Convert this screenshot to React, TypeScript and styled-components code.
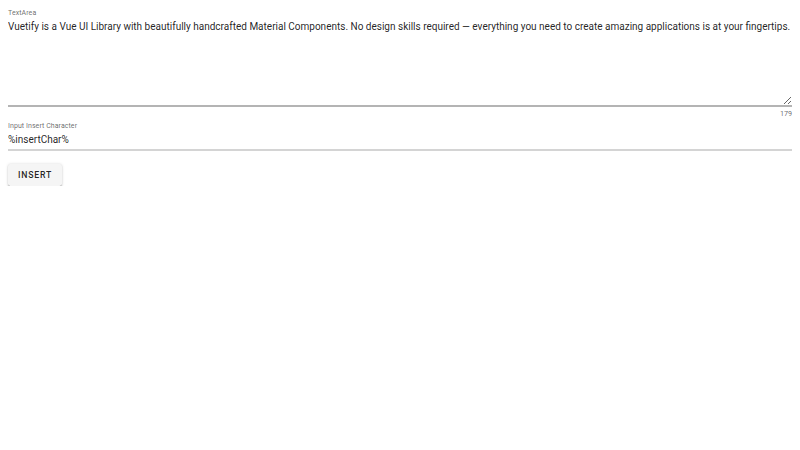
import React, { useState } from "react";
import styled, { createGlobalStyle } from "styled-components";

const GlobalStyle = createGlobalStyle`
  html, body { margin: 0; padding: 0; background: #ffffff; }
  body { font-family: Roboto, "Noto Sans", "Liberation Sans", sans-serif; }
  * { box-sizing: border-box; }
`;

const Page = styled.div`
  display: flex;
  flex-direction: column;
  padding: 8px 8px 0 8px;
  width: 800px;
`;

const Field = styled.div`
  display: flex;
  flex-direction: column;
`;

const Label = styled.label`
  display: block;
  font-size: 7px;
  line-height: 10px;
  height: 10px;
  color: rgba(0, 0, 0, 0.6);
  letter-spacing: 0.01em;
`;

const TextAreaBox = styled.textarea`
  display: block;
  width: 100%;
  height: 89px;
  margin: 0;
  padding: 1px 0 0 0;
  border: none;
  border-bottom: 2px solid #b4b4b4;
  outline: none;
  resize: vertical;
  font-family: Roboto, "Noto Sans", "Liberation Sans", sans-serif;
  font-size: 10px;
  line-height: 16.8px;
  color: rgba(0, 0, 0, 0.87);
  background: transparent;
  overflow: hidden;
`;

const Counter = styled.div`
  align-self: flex-end;
  font-size: 7.2px;
  line-height: 10px;
  height: 12px;
  padding-top: 2px;
  color: rgba(0, 0, 0, 0.6);
`;

const Spacer = styled.div<{ h: number }>`
  height: ${(p) => p.h}px;
`;

const TextInput = styled.input`
  display: block;
  width: 100%;
  height: 20px;
  margin: 0;
  padding: 0 0 2px 0;
  border: none;
  border-bottom: 2px solid #d4d4d4;
  outline: none;
  font-family: Roboto, "Noto Sans", "Liberation Sans", sans-serif;
  font-size: 10px;
  line-height: 16px;
  color: rgba(0, 0, 0, 0.87);
  background: transparent;
`;

const Button = styled.button`
  align-self: flex-start;
  height: 22px;
  width: 54px;
  padding: 0;
  border: none;
  border-radius: 2.4px;
  background: #f5f5f5;
  color: rgba(0, 0, 0, 0.87);
  font-family: Roboto, "Noto Sans", "Liberation Sans", sans-serif;
  font-size: 8.7px;
  font-weight: 500;
  letter-spacing: 0.0892em;
  text-transform: uppercase;
  box-shadow: 0 2px 1px -1.2px rgba(0, 0, 0, 0.22),
    0 1.2px 1.5px 0 rgba(0, 0, 0, 0.16), 0 0.6px 3px 0 rgba(0, 0, 0, 0.14);
  cursor: pointer;
`;

const initialText =
  "Vuetify is a Vue UI Library with beautifully handcrafted Material Components. No design skills required — everything you need to create amazing applications is at your fingertips.";

export default function App() {
  const [text, setText] = useState(initialText);
  const [insertChar, setInsertChar] = useState("%insertChar%");

  return (
    <>
      <GlobalStyle />
      <Page>
        <Field>
          <Label>TextArea</Label>
          <TextAreaBox value={text} onChange={(e) => setText(e.target.value)} />
          <Counter>{text.length}</Counter>
        </Field>
        <Spacer h={2} />
        <Field>
          <Label>Input Insert Character</Label>
          <TextInput
            value={insertChar}
            onChange={(e) => setInsertChar(e.target.value)}
          />
        </Field>
        <Spacer h={13} />
        <Button onClick={() => setText(text + insertChar)}>Insert</Button>
      </Page>
    </>
  );
}
